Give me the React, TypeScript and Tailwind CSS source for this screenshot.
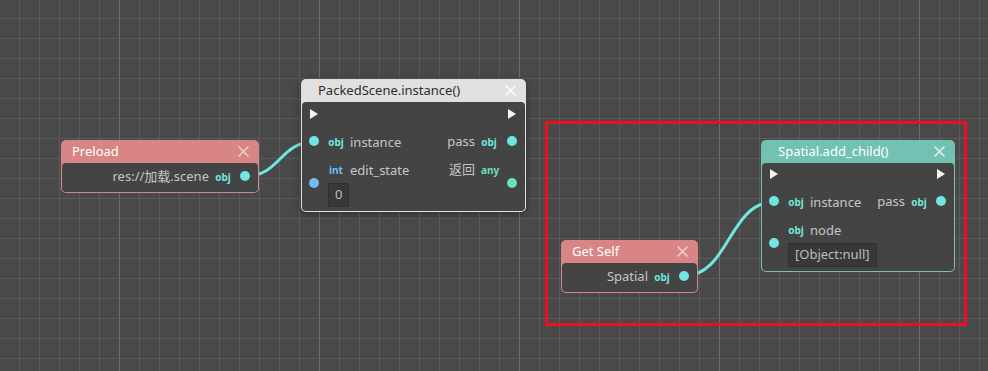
import type { ReactNode } from 'react'

const CYAN = '#6fe6df'
const BLUE = '#72bdf0'
const GREEN = '#63e3b0'

type NodeProps = {
  x: number
  y: number
  w: number
  title: string
  frame: string
  titleText: string
  closeColor: string
  wide?: boolean
  shadow?: boolean
  children: ReactNode
}

const Close = ({ color }: { color: string }) => (
  <svg width="11" height="11" viewBox="0 0 11 11" className="shrink-0">
    <path d="M1 1 L10 10 M10 1 L1 10" stroke={color} strokeWidth="1.6" strokeLinecap="round" />
  </svg>
)

const GraphNode = ({ x, y, w, title, frame, titleText, closeColor, wide, shadow, children }: NodeProps) => (
  <div
    className={`absolute rounded-[5px] px-px pb-px ${shadow ? 'shadow-[0_2px_8px_rgba(0,0,0,0.35)]' : ''}`}
    style={{ left: x, top: y, width: w, backgroundColor: frame }}
  >
    <div className={`h-[23px] flex items-center justify-between pr-[9px] ${wide ? 'pl-[16px]' : 'pl-[10px]'}`}>
      <span className="text-[13px] leading-none" style={{ color: titleText }}>{title}</span>
      <Close color={closeColor} />
    </div>
    <div className="rounded-[4px] bg-[#444444]">{children}</div>
  </div>
)

const Port = ({ color }: { color: string }) => (
  <div className="w-[10px] h-[10px] rounded-full shrink-0" style={{ backgroundColor: color }} />
)

const TypeIcon = ({ kind }: { kind: 'obj' | 'int' | 'any' }) => {
  const color = kind === 'obj' ? CYAN : kind === 'int' ? BLUE : GREEN
  return (
    <span
      className="w-[16px] shrink-0 text-[10px] font-bold leading-none text-center pt-[1px]"
      style={{ color }}
    >
      {kind}
    </span>
  )
}

const Triangle = () => (
  <svg width="8" height="10" viewBox="0 0 8 10">
    <path d="M0 0 L8 5 L0 10 Z" fill="#f4f4f4" />
  </svg>
)

const SeqRow = () => (
  <div className="h-[22px] flex items-center justify-between pl-[8px] pr-[9px]">
    <Triangle />
    <Triangle />
  </div>
)

const Label = ({ children }: { children: ReactNode }) => (
  <span className="text-[13px] text-[#c6c6c6] leading-none whitespace-nowrap">{children}</span>
)

const InputBox = ({ children }: { children: ReactNode }) => (
  <div className="mt-[3px] h-[24px] self-start flex items-center px-[6px] bg-[#383838] border border-[#303030] text-[13px] text-[#bdbdbd]">
    {children}
  </div>
)

const OutputRow = ({ label }: { label: string }) => (
  <div className="pt-[2px] pb-[5px]">
    <div className="h-[22px] flex items-center justify-end pr-[8px]">
      <Label>{label}</Label>
      <span className="ml-[6px] flex"><TypeIcon kind="obj" /></span>
      <span className="ml-[9px] flex"><Port color={CYAN} /></span>
    </div>
  </div>
)

const grid = () => {
  const lines: ReactNode[] = []
  for (let x = 19; x < 988; x += 20) {
    const major = (x - 119) % 200 === 0
    lines.push(<line key={`v${x}`} x1={x + 0.5} y1={0} x2={x + 0.5} y2={371} stroke={major ? '#6e6e6e' : '#5a5a5a'} strokeWidth="1" />)
  }
  for (let y = 18; y < 371; y += 20) {
    lines.push(<line key={`h${y}`} x1={0} y1={y + 0.5} x2={988} y2={y + 0.5} stroke="#5a5a5a" strokeWidth="1" />)
  }
  return lines
}

export default function App() {
  return (
    <div className="relative w-[988px] h-[371px] overflow-hidden bg-[#494949] font-['Noto_Sans','Noto_Sans_CJK_SC',sans-serif]">
      <svg className="absolute inset-0" width="988" height="371">
        {grid()}
        <path d="M246 176 C280 176 280 142 314 142" stroke={CYAN} strokeWidth="3" fill="none" strokeLinecap="round" />
        <path d="M684 276 C729 276 729 202 774 202" stroke={CYAN} strokeWidth="3" fill="none" strokeLinecap="round" />
      </svg>

      <GraphNode x={61} y={140} w={198} title="Preload" frame="#d98585" titleText="#ffffff" closeColor="#f3cccc">
        <OutputRow label="res://加载.scene" />
      </GraphNode>

      <GraphNode x={301} y={79} w={225} title="PackedScene.instance()" frame="#e0e0e0" titleText="#2e2e2e" closeColor="#fafafa" wide shadow>
        <div className="pt-[1px] pb-[4px] flex flex-col">
          <SeqRow />
          <div className="mt-[5px] h-[22px] flex items-center pl-[7px] pr-[8px]">
            <Port color={CYAN} />
            <span className="ml-[9px] flex"><TypeIcon kind="obj" /></span>
            <span className="ml-[6px]"><Label>instance</Label></span>
            <div className="flex-1" />
            <Label>pass</Label>
            <span className="ml-[6px] flex"><TypeIcon kind="obj" /></span>
            <span className="ml-[10px] flex"><Port color={CYAN} /></span>
          </div>
          <div className="mt-[6px] flex items-center pl-[7px] pr-[8px]">
            <Port color={BLUE} />
            <div className="ml-[9px] flex flex-col">
              <div className="h-[22px] flex items-center">
                <TypeIcon kind="int" />
                <span className="ml-[6px]"><Label>edit_state</Label></span>
              </div>
              <InputBox>0</InputBox>
            </div>
            <div className="flex-1" />
            <div className="self-start h-[22px] flex items-center">
              <Label>返回</Label>
              <span className="ml-[6px] flex"><TypeIcon kind="any" /></span>
            </div>
            <span className="ml-[10px] flex"><Port color={GREEN} /></span>
          </div>
        </div>
      </GraphNode>

      <GraphNode x={561} y={240} w={137} title="Get Self" frame="#d98585" titleText="#ffffff" closeColor="#f3cccc">
        <OutputRow label="Spatial" />
      </GraphNode>

      <GraphNode x={761} y={140} w={194} title="Spatial.add_child()" frame="#72c1b2" titleText="#ffffff" closeColor="#d9f1ec" wide>
        <div className="pt-[0px] pb-[4px] flex flex-col">
          <SeqRow />
          <div className="mt-[5px] h-[22px] flex items-center pl-[7px] pr-[8px]">
            <Port color={CYAN} />
            <span className="ml-[9px] flex"><TypeIcon kind="obj" /></span>
            <span className="ml-[6px]"><Label>instance</Label></span>
            <div className="flex-1" />
            <Label>pass</Label>
            <span className="ml-[6px] flex"><TypeIcon kind="obj" /></span>
            <span className="ml-[9px] flex"><Port color={CYAN} /></span>
          </div>
          <div className="mt-[6px] flex items-center pl-[7px] pr-[8px]">
            <Port color={CYAN} />
            <div className="ml-[9px] flex flex-col">
              <div className="h-[22px] flex items-center">
                <TypeIcon kind="obj" />
                <span className="ml-[6px]"><Label>node</Label></span>
              </div>
              <InputBox>[Object:null]</InputBox>
            </div>
          </div>
        </div>
      </GraphNode>

      <div className="absolute left-[545px] top-[121px] w-[422px] h-[205px] border-[3px] border-[#ec0f1f]" />
    </div>
  )
}
